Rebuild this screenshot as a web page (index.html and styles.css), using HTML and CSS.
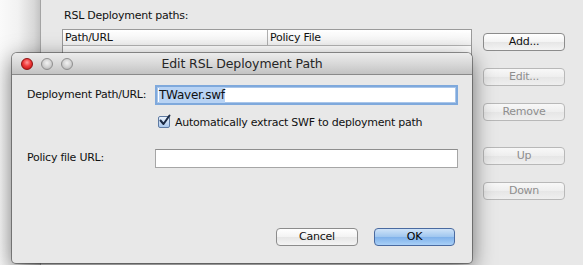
FILE: index.html
```html
<!DOCTYPE html>
<html>
<head>
<meta charset="utf-8">
<link rel="stylesheet" href="styles.css">
</head>
<body>
<div class="desk">
  <div class="desk-side"></div>
  <div class="bgwin">
    <div class="bg-main">
      <div class="bg-label">RSL Deployment paths:</div>
      <div class="table">
        <div class="thead">
          <div class="th th-path">Path/URL</div>
          <div class="th th-policy">Policy File</div>
        </div>
        <div class="tbody"></div>
      </div>
    </div>
    <div class="bg-buttons">
      <button class="mbtn">Add...</button>
      <button class="mbtn disabled">Edit...</button>
      <button class="mbtn disabled">Remove</button>
      <button class="mbtn disabled gap">Up</button>
      <button class="mbtn disabled">Down</button>
    </div>
  </div>
</div>

<div class="dialog">
  <div class="titlebar">
    <div class="lights">
      <span class="light red"></span>
      <span class="light grey"></span>
      <span class="light grey"></span>
    </div>
    <div class="title">Edit RSL Deployment Path</div>
  </div>
  <div class="dbody">
    <div class="form">
      <label class="flabel">Deployment Path/URL:</label>
      <div class="field focus"><span class="sel">TWaver.swf</span></div>
      <div></div>
      <div class="check-row">
        <span class="checkbox">
          <svg width="13" height="13" viewBox="0 0 13 13"><path d="M2.5 6.5 L5.5 10 L11.5 1.5" fill="none" stroke="#1b2a44" stroke-width="2" stroke-linecap="round" stroke-linejoin="round"/></svg>
        </span>
        <span class="check-text">Automatically extract SWF to deployment path</span>
      </div>
      <label class="flabel policy">Policy file URL:</label>
      <div class="field policy"></div>
    </div>
    <div class="actions">
      <button class="mbtn dlg">Cancel</button>
      <button class="mbtn dlg ok">OK</button>
    </div>
  </div>
</div>
</body>
</html>
```

FILE: styles.css
```css
html, body {
  margin: 0;
  padding: 0;
}
body {
  width: 583px;
  height: 265px;
  overflow: hidden;
  position: relative;
  font-family: "DejaVu Sans", "Liberation Sans", sans-serif;
  font-size: 11px;
  letter-spacing: -0.25px;
  color: #111;
  background: #e8e8e8;
}
.desk {
  display: flex;
  height: 265px;
  overflow: hidden;
}
.desk-side {
  width: 40px;
  flex: none;
  background: linear-gradient(to right, #fafafa 0px, #f2f2f2 18px, #d8d8d8 34px, #c4c4c4 40px);
}
.bgwin {
  flex: 1;
  display: flex;
  border-left: 1px solid #a4a4a4;
  background: #e8e8e8;
}
.bg-main {
  width: 410px;
  padding-left: 21px;
  padding-top: 8px;
}
.bg-label {
  padding-left: 2px;
  height: 21px;
  line-height: 15px;
}
.table {
  border: 1px solid #9a9a9a;
  width: 408px;
  background: #fff;
}
.thead {
  display: flex;
  height: 15px;
  border-bottom: 1px solid #b4b4b4;
  background: linear-gradient(#ffffff, #f2f2f2);
}
.th {
  line-height: 15px;
  padding-left: 2px;
}
.th-path {
  width: 202px;
  border-right: 1px solid #b0b0b0;
}
.tbody {
  height: 190px;
}
.bg-buttons {
  display: flex;
  flex-direction: column;
  padding-top: 33px;
  padding-left: 11px;
}
.mbtn {
  width: 82px;
  height: 18px;
  margin: 0 0 17px 0;
  padding: 0;
  border: 1px solid #8c8c8c;
  border-radius: 4px;
  background: linear-gradient(#ffffff, #f3f3f3 50%, #e6e6e6 51%, #f4f4f4);
  font-family: "DejaVu Sans", "Liberation Sans", sans-serif;
  font-size: 11px;
  letter-spacing: -0.25px;
  color: #111;
  line-height: 16px;
}
.mbtn.disabled {
  border-color: #b8b8b8;
  color: #8e8e8e;
  background: linear-gradient(#f8f8f8, #eeeeee 50%, #e6e6e6 51%, #efefef);
}
.mbtn.gap {
  margin-top: 9px;
}

/* dialog */
.dialog {
  position: absolute;
  left: 12px;
  top: 53px;
  width: 460px;
  height: 210px;
  border-radius: 5px 5px 4px 4px;
  background: #e8e8e8;
  box-shadow: 0 0 0 1px rgba(60,60,60,0.55), 0 6px 22px rgba(0,0,0,0.55);
  overflow: hidden;
}
.titlebar {
  height: 21px;
  display: flex;
  align-items: center;
  position: relative;
  background: linear-gradient(#ececec, #d9d9d9 50%, #c3c3c3);
  border-bottom: 1px solid #8a8a8a;
}
.lights {
  display: flex;
  gap: 8px;
  padding-left: 9px;
}
.light {
  width: 12px;
  height: 12px;
  border-radius: 50%;
  box-sizing: border-box;
}
.light.red {
  background: radial-gradient(circle at 50% 35%, #ff9a9a 0, #f03a3a 45%, #b50d0d 100%);
  border: 1px solid #8e1010;
}
.light.grey {
  background: radial-gradient(circle at 50% 40%, #f2f2f2 0, #d3d3d3 50%, #a9a9a9 100%);
  border: 1px solid #8f8f8f;
}
.title {
  position: absolute;
  left: 0;
  right: 0;
  text-align: center;
  font-size: 12.5px;
  letter-spacing: -0.1px;
  color: #262626;
  pointer-events: none;
}
.dbody {
  padding: 10px 14px 0 15px;
  display: flex;
  flex-direction: column;
  height: 178px;
}
.form {
  display: grid;
  grid-template-columns: 128px 303px;
  align-items: center;
}
.flabel {
  line-height: 20px;
}
.field {
  height: 19px;
  box-sizing: border-box;
  background: #fff;
  border: 1px solid #a6a6a6;
  border-top-color: #8e8e8e;
}
.field.focus {
  height: 20px;
  border: 2px solid #7fa9dc;
  box-shadow: inset 0 0 0 1px #a9c6ea;
  padding: 0 2px;
  line-height: 16px;
  font-size: 12px;
}
.sel {
  background: #b8d3f4;
  display: inline-block;
  line-height: 16px;
}
.check-row {
  display: flex;
  align-items: center;
  gap: 5px;
  margin-top: 9px;
  margin-left: 3px;
  height: 16px;
}
.checkbox {
  width: 12px;
  height: 12px;
  border: 1px solid #5d7aa3;
  border-radius: 2px;
  background: linear-gradient(#eaf2fc, #a9c7ec);
  display: flex;
  align-items: center;
  justify-content: center;
  box-sizing: border-box;
  overflow: visible;
}
.checkbox svg {
  margin-top: -3px;
  margin-left: 1px;
  flex: none;
}
.flabel.policy {
  margin-top: 18px;
}
.field.policy {
  margin-top: 18px;
}
.actions {
  margin-top: auto;
  margin-bottom: 17px;
  display: flex;
  justify-content: flex-end;
  gap: 16px;
  padding-right: 3px;
}
.mbtn.dlg {
  margin: 0;
}
.mbtn.ok {
  width: 81px;
  border-color: #4a6aa0;
  background: linear-gradient(#cfe3f8, #9fc6ef 50%, #7fb1ea 51%, #a9d0f7);
  color: #000;
}
```
